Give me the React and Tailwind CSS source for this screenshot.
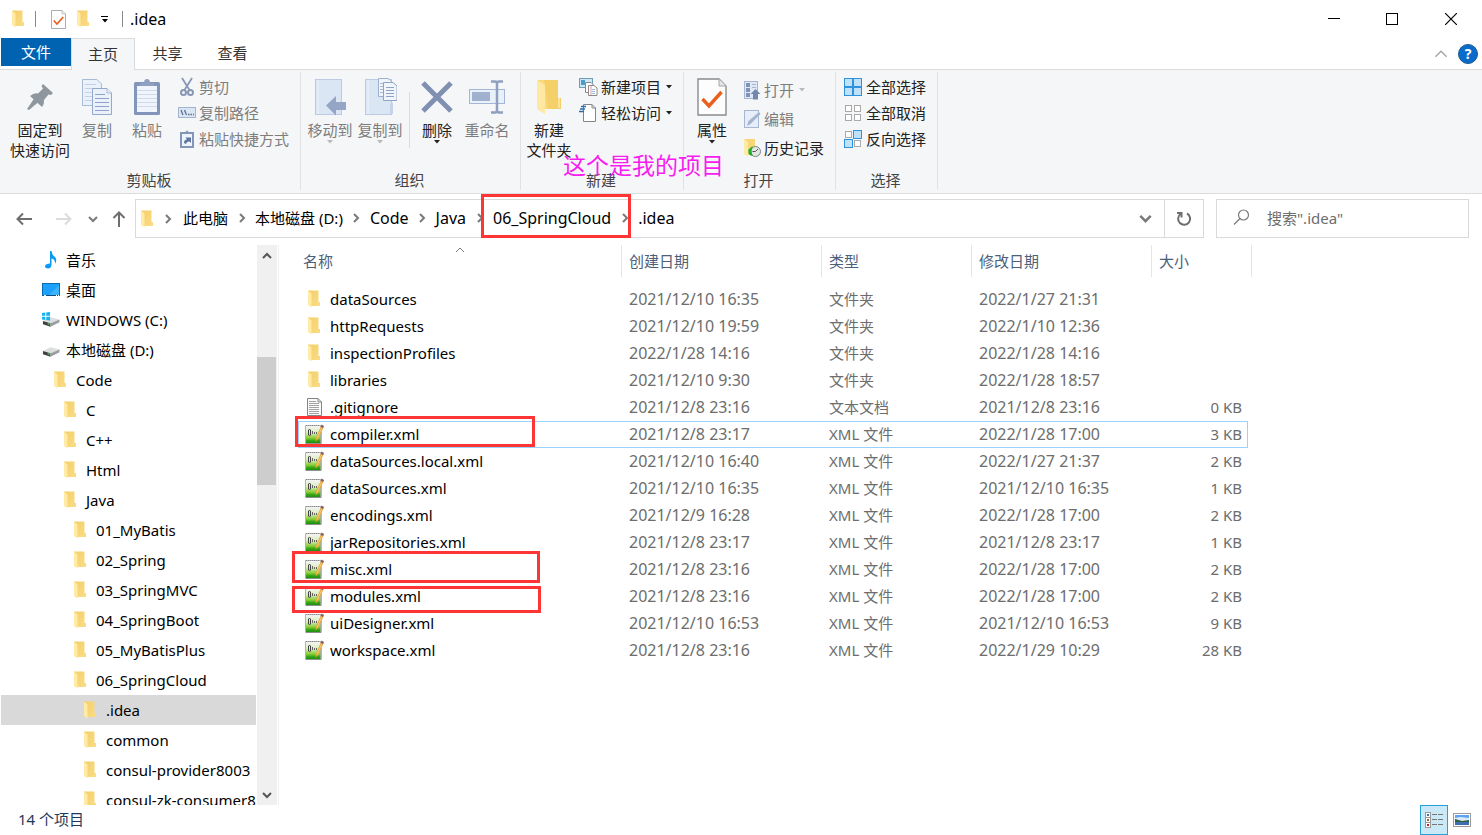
import clsx from "clsx";

// Icons
const FolderIcon = ({ className }) => (
  <svg width="12" height="18" viewBox="0.5 0 12 18" className={clsx("shrink-0", className)}>
    <defs>
      <linearGradient id="folderBack" x1="0" y1="0" x2="1" y2="1">
        <stop offset="0" stopColor="#f3cf6b" />
        <stop offset="1" stopColor="#fbdc85" />
      </linearGradient>
    </defs>
    <path d="M0.5 0.5H11V12H12.5V16H3L0.5 14Z" fill="url(#folderBack)" />
    <path d="M0.5 0.5L4 3.5V17.5L0.5 15Z" fill="#ffeaa6" />
  </svg>
);

const BigFolderIcon = () => (
  <svg width="26" height="36" viewBox="0 0 26 36">
    <path d="M2 1H22V19H25V30H6L2 27Z" fill="#f9d978" />
    <path d="M8 1H22V19H25V30H12Z" fill="#f5d068" />
    <path d="M1 1L9 6V35L1 30Z" fill="#ffe9a2" />
    <path d="M23 19V29" stroke="#fbe39a" strokeWidth="2" />
  </svg>
);

const PageCheckIcon = ({ width, height }) => (
  <svg width={width} height={height} viewBox="0 0 30 38">
    <path d="M1 1H22L29 8V37H1Z" fill="#fdfdfd" stroke="#8b8b8b" strokeWidth="1.4" />
    <path d="M22 1V8H29" fill="#e6e6e6" stroke="#a5a5a5" />
    <path d="M5.500 21L12 28L24.500 14" fill="none" stroke="#e8601c" strokeWidth="3.400" />
  </svg>
);

const PinIcon = () => (
  <svg width="28" height="28" viewBox="0 0 28 28" fill="#8f979e">
    <path d="M17 1L27 10L25 12L22.500 11.500L18 17Q18.500 21 16 24L4 13Q8 9.500 12 10.500L17 5.500L15.500 3Z" />
    <path d="M8.500 15L12.500 19L3 27L1 26Z" />
  </svg>
);

const CopyIcon = () => (
  <svg width="32" height="38" viewBox="0 0 32 38" fill="#eaf1fb" stroke="#a9bad6">
    <path d="M1.500 1.500H16L20.500 6V27.500H1.500Z" />
    <path d="M4 6.500H15M4 10.500H18M4 14.500H18M4 18.500H18M4 22.500H18" stroke="#c3d1e8" />
    <path d="M11.500 10.500H26L30.500 15V36.500H11.500Z" stroke="#94a8ca" />
    <path d="M26 10.500V15H30.500" />
    <path d="M14 16.500H24M14 20.500H28M14 24.500H28M14 28.500H28M14 32.500H28" stroke="#8fa3c6" />
  </svg>
);

const PasteIcon = () => (
  <svg width="28" height="38" viewBox="0 0 28 38">
    <rect x="1" y="4" width="26" height="33" rx="1.500" fill="#8396ba" />
    <rect x="4" y="8" width="20" height="26" fill="#f0f5fc" />
    <path d="M4 12.500H24M4 16.500H24M4 20.500H24M4 24.500H24M4 28.500H24" stroke="#cfdbed" />
    <path d="M7 8V5H11Q11 1 14 1Q17 1 17 5H21V8Z" fill="#8fa0c0" />
  </svg>
);

const ScissorsIcon = () => (
  <svg width="18" height="20" viewBox="0 0 18 20" fill="none" stroke="#8797b5">
    <path d="M4 1L11.500 13M14 1L6.500 13" strokeWidth="1.800" />
    <circle cx="5.500" cy="15.500" r="2.500" strokeWidth="2" />
    <circle cx="12.500" cy="15.500" r="2.500" strokeWidth="2" />
  </svg>
);

const CopyPathIcon = () => (
  <svg width="18" height="18" viewBox="0 0 18 18">
    <rect x="0.500" y="3.500" width="17" height="10" fill="#dbe6f5" stroke="#a3b3d0" />
    <path d="M3 6L5 11M6.500 6L8.500 11" stroke="#5e6f91" strokeWidth="1.300" />
    <path d="M10 10.500H11.500M12.500 10.500H14M15 10.500H16" stroke="#5e6f91" strokeWidth="1.300" />
  </svg>
);

const PasteShortcutIcon = () => (
  <svg width="18" height="20" viewBox="0 0 18 20">
    <rect x="3" y="4" width="12" height="14" fill="#eef4fc" stroke="#8396ba" strokeWidth="2" />
    <path d="M6 5V3H7.500Q9 0 10.500 3H12V5Z" fill="#8396ba" />
    <path d="M6 14Q6 10.500 9 10.500L7.500 8.500H13V14L11.500 12.500Q8.500 12 8 15Z" fill="#5d759f" />
  </svg>
);

const MoveToIcon = () => (
  <svg width="34" height="38" viewBox="0 0 34 38">
    <rect x="2.500" y="1.500" width="26" height="35" fill="#dbe6f5" stroke="#bccbe3" />
    <path d="M5 2V36" stroke="#edf3fb" />
    <path d="M13 27.500L23 18V24H33V32H23V37.500Z" fill="#94a5c5" />
  </svg>
);

const CopyToIcon = () => (
  <svg width="34" height="38" viewBox="0 0 34 38">
    <rect x="2.500" y="1.500" width="26" height="35" fill="#dbe6f5" stroke="#bccbe3" />
    <path d="M5 2V36" stroke="#edf3fb" />
    <path d="M15.500 0.500H25L28.500 3V18.500H15.500Z" fill="#f0f5fc" stroke="#9db0cf" />
    <path d="M17 5.500H26M17 8.500H26M17 11.500H26M17 14.500H26" stroke="#a9bad6" />
    <path d="M20.500 4.500H30L34 8V22.500H20.500Z" fill="#f0f5fc" stroke="#8fa3c6" />
    <path d="M23 9.500H31M23 12.500H31M23 15.500H31M23 18.500H31" stroke="#8fa3c6" />
    <path d="M27 36V26Q28 23 30 25V36Z" fill="#c6d4e9" />
  </svg>
);

const DeleteIcon = () => (
  <svg width="34" height="34" viewBox="0 0 34 34" stroke="#8090b2" strokeWidth="5">
    <path d="M3 3L31 31M31 3L3 31" />
  </svg>
);

const RenameIcon = () => (
  <svg width="38" height="36" viewBox="0 0 38 36" fill="none">
    <rect x="1.500" y="10.500" width="35" height="14" fill="#e8f0fa" stroke="#a3b6d6" />
    <rect x="4" y="13" width="18" height="9" fill="#a0b1cf" />
    <path d="M23 2.500H27Q29 2.500 29 5V31Q29 33.500 27 33.500H23M35 2.500H31Q29 2.500 29 5M35 33.500H31Q29 33.500 29 31" stroke="#8e9fbf" strokeWidth="2.500" />
  </svg>
);

const NewItemIcon = () => (
  <svg width="19" height="20" viewBox="0 0 19 20">
    <rect x="0.500" y="1.500" width="13" height="9" fill="#cfe7f3" stroke="#6f9db5" />
    <rect x="2" y="3" width="4" height="5" fill="#4b9cc9" />
    <path d="M6.500 5.500H12L14.500 8V15.500H6.500Z" fill="#fff" stroke="#8a8a8a" />
    <path d="M9.500 8.500H15L18 11V18.500H9.500Z" fill="#fff" stroke="#8a8a8a" />
    <path d="M12 9V18" stroke="#e79b9b" />
    <path d="M13 12.500H16M13 14.500H16M13 16.500H16" stroke="#9db9d8" />
  </svg>
);

const EasyAccessIcon = () => (
  <svg width="19" height="20" viewBox="0 0 19 20">
    <path d="M4.500 1.500H13L16.500 5V18.500H4.500Z" fill="#fff" stroke="#858585" />
    <path d="M13 1.500V5H16.500" fill="none" stroke="#858585" />
    <path d="M2 3.500H7M1 6H6M0 8.500H5" stroke="#2c6ca8" strokeWidth="1.300" />
  </svg>
);

const OpenIcon = () => (
  <svg width="17" height="20" viewBox="0 0 17 20">
    <rect x="0.500" y="1.500" width="13" height="17" fill="#dfe8f5" stroke="#a7b7d3" />
    <path d="M2 3H6V7H2ZM2 8H6V12H2ZM2 13H6V17H2Z" fill="#7f93b8" />
    <path d="M8 4.500H12M8 7.500H12" stroke="#a7b7d3" />
    <path d="M11.500 9L16.500 14H14V19.500H9V14H6.500Z" fill="#7387ae" />
  </svg>
);

const EditIcon = () => (
  <svg width="17" height="20" viewBox="0 0 17 20">
    <rect x="0.500" y="1.500" width="14" height="17" fill="#e6eefa" stroke="#a7b7d3" />
    <path d="M3 17L4.500 12L15 3L16.500 5L6.500 15Z" fill="#a4b3cf" />
  </svg>
);

const HistoryIcon = () => (
  <svg width="17" height="20" viewBox="0 0 17 20">
    <path d="M0 1H11V17H3L0 15Z" fill="#f7d677" />
    <path d="M0 1L4 4V19L0 16Z" fill="#ffeaa6" />
    <circle cx="11.500" cy="13.500" r="5" fill="#e4e6e4" stroke="#7d837d" />
    <path d="M11.500 13.500L14 11M11.500 13.500H8.500" stroke="#555" />
    <path d="M4 12L8.500 8V10Q6.500 13 9 18Q3.500 17.500 4.500 12.500Z" fill="#24ad35" />
  </svg>
);

const GRID_CELLS = [
  [0.5, 0.5],
  [9.5, 0.5],
  [0.5, 9.5],
  [9.5, 9.5],
];

const SelectIcon = ({ filled }) => (
  <svg width="18" height="18" viewBox="0 0 18 18">
    {GRID_CELLS.map(([x, y], i) => {
      const on = filled.includes(i);
      return (
        <rect
          key={i}
          x={on ? x : x + 1}
          y={on ? y : y + 1}
          width={on ? 8 : 6}
          height={on ? 8 : 6}
          fill={on ? "#bfe1fa" : "#fff"}
          stroke={on ? "#2f92dc" : "#a9a9a9"}
        />
      );
    })}
  </svg>
);

const MusicIcon = () => (
  <svg width="18" height="18" viewBox="0 0 18 18">
    <path d="M8 0H9.500Q10 4 13 6Q15.500 9 13 13Q13.500 8.500 9.500 7.500V14Q9 17.500 6 17.500Q3 17.500 3 15Q3.500 12.500 8 12.500Z" fill="#0a9bf5" />
  </svg>
);

const DesktopIcon = () => (
  <svg width="18" height="14" viewBox="0 0 18 14">
    <rect x="0.500" y="0.500" width="17" height="12" fill="#1ba1fb" stroke="#0b6cb5" />
    <path d="M7 12L17 2V12Z" fill="#3db2ff" />
    <path d="M1 12.500H17" stroke="#0a4f86" />
    <path d="M2 12.500H4M14 12.500H15M16 12.500H17" stroke="#fff" />
  </svg>
);

const DriveIcon = ({ windows }) => (
  <svg width="19" height="18" viewBox="0 0 19 18">
    <path d="M1 10L9 6L18.500 8.500L9 12.500Z" fill="#dcdee0" />
    <path d="M1 10L9 12.500V16L1 13.500Z" fill="#3e4143" />
    <path d="M9 12.500L18.500 8.500V11.500L9 16Z" fill="#9b9ea1" />
    <path d="M6 13.200H8" stroke="#54d05c" strokeWidth="1.500" />
    {windows && <path d="M0 1.500L3.500 1V4.500H0ZM4.500 1L8.500 0.500V4.500H4.500ZM0 5.500H3.500V9L0 8.500ZM4.500 5.500H8.500V9.500L4.500 9Z" fill="#16b1ee" />}
  </svg>
);

const TextFileIcon = () => (
  <svg width="20" height="20" viewBox="0 0 20 20">
    <path d="M2.500 1.500H13L16.500 5V18.500H2.500Z" fill="#fafafa" stroke="#858585" />
    <path d="M13 1.500V5H16.500" fill="none" stroke="#858585" />
    <path d="M4 4.500H11M4 6.500H14M4 8.500H14M4 10.500H14M4 12.500H14M4 14.500H14M4 16.500H14" stroke="#a3a3a3" />
  </svg>
);

const XmlFileIcon = () => (
  <svg width="20" height="20" viewBox="0 0 20 20">
    <defs>
      <linearGradient id="xmlGreen" x1="0" y1="0" x2="0" y2="1">
        <stop offset="0" stopColor="#f1f3ee" />
        <stop offset="0.350" stopColor="#dcedb8" />
        <stop offset="0.700" stopColor="#86cc34" />
        <stop offset="0.850" stopColor="#35a516" />
        <stop offset="1" stopColor="#1f8f12" />
      </linearGradient>
    </defs>
    <path d="M0.500 1.500H16V19.500H0.500Z" fill="#f2f2f2" stroke="#b3b3b3" />
    <rect x="1" y="3" width="14.500" height="16" fill="url(#xmlGreen)" />
    <path d="M1 1.500H15" stroke="#8c8c8c" strokeDasharray="1 1" />
    <path d="M16 8V19.500H1" fill="none" stroke="#8d938a" />
    <path d="M3.500 6V11M5.500 6V11" stroke="#444" />
    <path d="M3.500 5.500H5.500M3.500 11.500H5.500M7.500 7V10M9.500 8V10M11.500 8V10" stroke="#666" />
    <path d="M16.500 1L19 2.500L13 15L10.500 17.500L11 13.500Z" fill="#e6a53c" />
    <path d="M17.500 2L12 14.500" stroke="#f7cd7c" />
    <path d="M16.500 0.500L19 2L18 4L15.500 3Z" fill="#8c5f62" />
  </svg>
);

const PictureIcon = () => (
  <svg width="18" height="14" viewBox="0 0 18 14">
    <rect x="0.500" y="0.500" width="17" height="13" fill="#fff" stroke="#9a9a9a" />
    <rect x="2" y="2" width="14" height="4" fill="#5da3f0" />
    <path d="M2 5L7 4L16 5V8H2Z" fill="#dbeaf7" />
    <path d="M2 6L9 8L16 7V9H2Z" fill="#31603f" />
    <rect x="2" y="9" width="14" height="3" fill="#3f6fae" />
  </svg>
);

const DetailsIcon = () => (
  <svg width="18" height="17" viewBox="0 0 18 17">
    {["#3b73a8", "#a8672f", "#b5261e"].map((color, i) => (
      <g key={color}>
        <rect x="0.500" y={i * 5 + 0.5} width="5" height="5" fill="#fff" stroke="#999" />
        <rect x="2" y={i * 5 + 2} width="2" height="2" fill={color} />
        <path d={`M7 ${i * 5 + 2.5}H12M13 ${i * 5 + 2.5}H18`} stroke="#777" />
      </g>
    ))}
  </svg>
);

const Caret = ({ className }) => (
  <svg width="6" height="4" viewBox="0 0 6 4" className={clsx("shrink-0", className)}>
    <path d="M0 0H6L3 3.500Z" fill="currentColor" />
  </svg>
);

const Chevron = ({ d, size = 10, stroke = "#7a7a7a", strokeWidth = 2 }) => (
  <svg width={size} height={size} viewBox="0 0 10 10" fill="none" stroke={stroke} strokeWidth={strokeWidth}>
    <path d={d} />
  </svg>
);

const UP = "M1 7L5 3L9 7";
const DOWN = "M1 3L5 7L9 3";
const RIGHT = "M3 1L7 5L3 9";

const ArrowIcon = ({ d, color }) => (
  <svg width="16" height="16" viewBox="0 0 16 16" fill="none" stroke={color} strokeWidth="2">
    <path d={d} />
  </svg>
);

// Ribbon
const RibbonGroup = ({ title, className, children }) => (
  <section className={clsx("flex shrink-0 flex-col justify-between border-r border-[#e1e2e3]", className)}>
    <div className="flex">{children}</div>
    <h2 className="pr-0.5 text-center leading-5 text-[#444]">{title}</h2>
  </section>
);

const BigButton = ({ icon, lines, caret, disabled, className }) => (
  <button
    disabled={disabled}
    className={clsx("mt-1 flex shrink-0 flex-col items-center whitespace-nowrap leading-5", disabled ? "text-[#7d7d7d]" : "text-[#222]", className || "w-[50px]")}
  >
    <span className="flex h-11 items-center pb-0.5">{icon}</span>
    {lines.map((line) => (
      <span key={line}>{line}</span>
    ))}
    {caret && <Caret className={disabled ? "text-[#b9b9b9]" : "text-[#222]"} />}
  </button>
);

const SmallButton = ({ icon, label, caret, disabled, className }) => (
  <button
    disabled={disabled}
    className={clsx("flex items-center whitespace-nowrap", disabled ? "text-[#7d7d7d]" : "text-[#222]", className || "h-[26px] gap-[3px]")}
  >
    {icon}
    <span>{label}</span>
    {caret && <Caret className={clsx("ml-0.5", disabled && "text-[#b9b9b9]")} />}
  </button>
);

const Ribbon = () => (
  <div className="flex h-[125px] overflow-hidden border-y border-[#dadbdc] bg-[#f5f6f7] pt-0.5 pb-[3px]">
    <RibbonGroup title="剪贴板" className="w-[301px]">
      <BigButton icon={<PinIcon />} lines={["固定到", "快速访问"]} className="ml-[9px] w-[62px]" />
      <BigButton icon={<CopyIcon />} lines={["复制"]} disabled className="ml-px w-[50px]" />
      <BigButton icon={<PasteIcon />} lines={["粘贴"]} disabled />
      <div className="mt-0.5 ml-1.5 flex flex-col">
        <SmallButton icon={<ScissorsIcon />} label="剪切" disabled />
        <SmallButton icon={<CopyPathIcon />} label="复制路径" disabled />
        <SmallButton icon={<PasteShortcutIcon />} label="粘贴快捷方式" disabled />
      </div>
    </RibbonGroup>
    <RibbonGroup title="组织" className="w-[220px]">
      <BigButton icon={<MoveToIcon />} lines={["移动到"]} caret disabled className="ml-1 w-[50px]" />
      <BigButton icon={<CopyToIcon />} lines={["复制到"]} caret disabled />
      <div className="mt-5 mr-0.5 ml-1 h-14 w-px bg-[#dcddde]" />
      <BigButton icon={<DeleteIcon />} lines={["删除"]} caret />
      <BigButton icon={<RenameIcon />} lines={["重命名"]} disabled />
    </RibbonGroup>
    <RibbonGroup title="新建" className="relative w-[163px]">
      <BigButton icon={<BigFolderIcon />} lines={["新建", "文件夹"]} className="ml-[3px] w-[50px]" />
      <div className="mt-0.5 ml-[5px] flex flex-col">
        <SmallButton icon={<NewItemIcon />} label="新建项目" caret />
        <SmallButton icon={<EasyAccessIcon />} label="轻松访问" caret />
      </div>
      <span className="absolute bottom-[11px] left-[42px] z-10 text-[23px] leading-7 whitespace-nowrap text-[#f81cf0]">这个是我的项目</span>
    </RibbonGroup>
    <RibbonGroup title="打开" className="w-[152px]">
      <BigButton icon={<PageCheckIcon width={30} height={38} />} lines={["属性"]} caret className="ml-[3px] w-[50px]" />
      <div className="mt-[3px] ml-[7px] flex flex-col">
        <SmallButton icon={<OpenIcon />} label="打开" caret disabled className="h-[29px] gap-[3px]" />
        <SmallButton icon={<EditIcon />} label="编辑" disabled className="h-[29px] gap-[3px]" />
        <SmallButton icon={<HistoryIcon />} label="历史记录" className="h-[29px] gap-[3px]" />
      </div>
    </RibbonGroup>
    <RibbonGroup title="选择" className="w-[102px]">
      <div className="mt-0.5 ml-2 flex flex-col">
        <SmallButton icon={<SelectIcon filled={[0, 1, 2, 3]} />} label="全部选择" className="h-[26px] gap-1" />
        <SmallButton icon={<SelectIcon filled={[]} />} label="全部取消" className="h-[26px] gap-1" />
        <SmallButton icon={<SelectIcon filled={[1, 2]} />} label="反向选择" className="h-[26px] gap-1" />
      </div>
    </RibbonGroup>
  </div>
);

// Title bar and tabs
const TitleBar = () => (
  <header className="flex h-[38px] items-center justify-between pr-px pl-3">
    <div className="flex items-center">
      <FolderIcon />
      <span className="ml-[11px] h-4 w-px bg-[#8a8a8a]" />
      <button title="属性" className="ml-[15px]">
        <PageCheckIcon width={15} height={19} />
      </button>
      <button title="新建文件夹" className="ml-[11px]">
        <FolderIcon />
      </button>
      <button title="自定义快速访问工具栏" className="mx-3 flex flex-col items-center gap-0.5 text-black">
        <span className="h-px w-[7px] bg-black" />
        <Caret />
      </button>
      <span className="ml-0.5 h-4 w-px bg-[#8a8a8a]" />
      <h1 className="ml-[7px] text-base/5 text-black">.idea</h1>
    </div>
    <div className="flex">
      <button title="最小化" className="flex h-9 w-[58px] items-center justify-center">
        <svg width="12" height="12" viewBox="0 0 12 12" stroke="#000">
          <path d="M0 5.500H12" />
        </svg>
      </button>
      <button title="最大化" className="flex h-9 w-[58px] items-center justify-center">
        <svg width="12" height="12" viewBox="0 0 12 12" fill="none" stroke="#000">
          <rect x="0.500" y="0.500" width="11" height="11" />
        </svg>
      </button>
      <button title="关闭" className="flex h-9 w-[60px] items-center justify-center">
        <svg width="12" height="12" viewBox="0 0 12 12" stroke="#000" strokeWidth="1.200">
          <path d="M0 0L12 12M12 0L0 12" />
        </svg>
      </button>
    </div>
  </header>
);

const Tabs = () => (
  <nav className="-mb-px flex h-8 justify-between">
    <div className="flex">
      <button className="ml-px h-7 w-[70px] bg-[#0063b1] text-white">文件</button>
      <button className="z-10 w-16 border border-b-0 border-[#dadbdc] bg-[#f5f6f7] pb-0.5 text-[#333]">主页</button>
      <button className="w-[65px] pb-0.5 text-[#333]">共享</button>
      <button className="w-[65px] pb-0.5 text-[#333]">查看</button>
    </div>
    <div className="flex items-center gap-2.5 pr-1">
      <button title="最小化功能区">
        <Chevron d={UP} size={14} stroke="#a5a5a5" strokeWidth={1} />
      </button>
      <button title="帮助" className="size-5 rounded-full border border-[#1d5a94] bg-[#0a6bcb] text-sm leading-4 font-bold text-white">
        ?
      </button>
    </div>
  </nav>
);

// Address bar
const crumbs = [
  { label: "此电脑" },
  { label: "本地磁盘 (D:)" },
  { label: "Code", latin: true },
  { label: "Java", latin: true },
  { label: "06_SpringCloud", latin: true, marked: true },
  { label: ".idea", latin: true },
];

const AddressBar = () => (
  <div className="flex h-[51px] items-start pt-[5px] pr-[13px]">
    <div className="flex h-[39px] w-[135px] shrink-0 items-center pl-4">
      <button title="后退">
        <ArrowIcon d="M16 8H1.500M7 2.500L1.500 8L7 13.500" color="#6e6e6e" />
      </button>
      <button title="前进" className="ml-6" disabled>
        <ArrowIcon d="M0 8H14.500M9 2.500L14.500 8L9 13.500" color="#dcdcdc" />
      </button>
      <button title="最近浏览的位置" className="ml-4">
        <Chevron d={DOWN} />
      </button>
      <button title="上移" className="ml-[13px]">
        <ArrowIcon d="M8 16V1.500M2.500 7L8 1.500L13.500 7" color="#6e6e6e" />
      </button>
    </div>
    <div className="flex h-[39px] min-w-0 flex-1 items-center border border-[#d9d9d9] pl-[5px] text-black">
      <FolderIcon />
      <span className="flex w-[30px] justify-center">
        <Chevron d={RIGHT} />
      </span>
      {crumbs.map(({ label, latin, marked }, i) => (
        <span key={label} className="relative flex items-center whitespace-nowrap">
          <button className={clsx("pb-0.5", latin && "text-base/5")}>{label}</button>
          {i < crumbs.length - 1 && (
            <span className="flex w-[27px] justify-center pb-0.5">
              <Chevron d={RIGHT} />
            </span>
          )}
          {marked && <span className="absolute -top-3.5 right-[7px] -bottom-2 -left-3 border-3 border-[#fd3535]" />}
        </span>
      ))}
      <button title="以前的位置" className="mr-3 ml-auto">
        <Chevron d={DOWN} size={13} />
      </button>
      <button title="刷新" className="flex h-full w-[39px] items-center justify-center border-l border-[#d9d9d9]">
        <svg width="16" height="16" viewBox="0 0 16 16" fill="none" stroke="#6e6e6e" strokeWidth="2">
          <path d="M11 2.500A6 6 0 1 1 4.500 3" />
          <path d="M1 2H5.500V6.500" />
        </svg>
      </button>
    </div>
    <div className="ml-3 flex h-[39px] w-[253px] items-center gap-[17px] border border-[#d9d9d9] pb-0.5 pl-4">
      <svg width="17" height="17" viewBox="0 0 17 17" fill="none" stroke="#7a7a7a" strokeWidth="1.200" className="shrink-0">
        <circle cx="10.500" cy="6" r="5" />
        <path d="M7 9.500L1 15.500" />
      </svg>
      <input aria-label="搜索" placeholder={'搜索".idea"'} className="w-full min-w-0 outline-none placeholder:text-[#6d6d6d]" />
    </div>
  </div>
);

// Navigation tree
const levelPadding = ["pl-[41px]", "pl-[51px]", "pl-[61px]", "pl-[71px]", "pl-[81px]"];

const tree = [
  { label: "音乐", level: 0, icon: <MusicIcon /> },
  { label: "桌面", level: 0, icon: <DesktopIcon /> },
  { label: "WINDOWS (C:)", level: 0, icon: <DriveIcon windows /> },
  { label: "本地磁盘 (D:)", level: 0, icon: <DriveIcon /> },
  { label: "Code", level: 1 },
  { label: "C", level: 2 },
  { label: "C++", level: 2 },
  { label: "Html", level: 2 },
  { label: "Java", level: 2 },
  { label: "01_MyBatis", level: 3 },
  { label: "02_Spring", level: 3 },
  { label: "03_SpringMVC", level: 3 },
  { label: "04_SpringBoot", level: 3 },
  { label: "05_MyBatisPlus", level: 3 },
  { label: "06_SpringCloud", level: 3 },
  { label: ".idea", level: 4, selected: true },
  { label: "common", level: 4 },
  { label: "consul-provider8003", level: 4 },
  { label: "consul-zk-consumer80", level: 4 },
];

const Sidebar = () => (
  <aside className="flex w-[279px] shrink-0 border-r border-[#f0f0f0] pl-px">
    <ul className="w-[255px] overflow-hidden">
      {tree.map(({ label, level, icon, selected }) => (
        <li key={label}>
          <button className={clsx("flex h-[30px] w-full items-center gap-1.5 whitespace-nowrap text-black", levelPadding[level], selected && "bg-[#d9d9d9]")}>
            <span className="flex w-[18px] shrink-0 justify-center">{icon || <FolderIcon className="mr-0.5" />}</span>
            {label}
          </button>
        </li>
      ))}
    </ul>
    <div className="ml-px flex w-5 flex-col bg-[#f0f0f0]">
      <button title="向上滚动" className="flex h-[21px] items-center justify-center">
        <Chevron d={UP} stroke="#555" />
      </button>
      <div className="grow-[91]" />
      <div className="mr-px grow-[128] bg-[#cdcdcd]" />
      <div className="grow-[299]" />
      <button title="向下滚动" className="flex h-[21px] items-center justify-center">
        <Chevron d={DOWN} stroke="#555" />
      </button>
    </div>
  </aside>
);

// File list
const XML = "XML 文件";

const files = [
  { name: "dataSources", created: "2021/12/10 16:35", type: "文件夹", modified: "2022/1/27 21:31" },
  { name: "httpRequests", created: "2021/12/10 19:59", type: "文件夹", modified: "2022/1/10 12:36" },
  { name: "inspectionProfiles", created: "2022/1/28 14:16", type: "文件夹", modified: "2022/1/28 14:16" },
  { name: "libraries", created: "2021/12/10 9:30", type: "文件夹", modified: "2022/1/28 18:57" },
  { name: ".gitignore", created: "2021/12/8 23:16", type: "文本文档", modified: "2021/12/8 23:16", size: "0 KB" },
  { name: "compiler.xml", created: "2021/12/8 23:17", type: XML, modified: "2022/1/28 17:00", size: "3 KB", focused: true, mark: "-top-1.5 -left-1 h-[31px] w-60" },
  { name: "dataSources.local.xml", created: "2021/12/10 16:40", type: XML, modified: "2022/1/27 21:37", size: "2 KB" },
  { name: "dataSources.xml", created: "2021/12/10 16:35", type: XML, modified: "2021/12/10 16:35", size: "1 KB" },
  { name: "encodings.xml", created: "2021/12/9 16:28", type: XML, modified: "2022/1/28 17:00", size: "2 KB" },
  { name: "jarRepositories.xml", created: "2021/12/8 23:17", type: XML, modified: "2021/12/8 23:17", size: "1 KB" },
  { name: "misc.xml", created: "2021/12/8 23:16", type: XML, modified: "2022/1/28 17:00", size: "2 KB", mark: "-top-[5px] -left-1.5 h-8 w-[248px]" },
  { name: "modules.xml", created: "2021/12/8 23:16", type: XML, modified: "2022/1/28 17:00", size: "2 KB", mark: "top-[3px] -left-1.5 h-[27px] w-[249px]" },
  { name: "uiDesigner.xml", created: "2021/12/10 16:53", type: XML, modified: "2021/12/10 16:53", size: "9 KB" },
  { name: "workspace.xml", created: "2021/12/8 23:16", type: XML, modified: "2022/1/29 10:29", size: "28 KB" },
];

const fileIcon = (type) => {
  if (type === "文件夹") return <FolderIcon className="mr-0.5" />;
  return type === XML ? <XmlFileIcon /> : <TextFileIcon />;
};

const FileRow = ({ file }) => {
  const edge = file.focused && "border-y border-[#99d1ff]";
  return (
    <tr className="h-[27px] text-[#6d6d6d]">
      <td className={clsx("relative p-0 pb-0.5", edge, file.focused && "border-l")}>
        <div className={clsx("flex items-center gap-[5px] text-black", file.focused ? "pl-1.5" : "pl-[7px]")}>
          <span className="flex w-5 shrink-0 justify-center">{fileIcon(file.type)}</span>
          {file.name}
        </div>
        {file.mark && <span className={clsx("absolute border-3 border-[#fd3535]", file.mark)} />}
      </td>
      <td className={clsx("p-0 pb-0.5 pl-[7px] text-base/5", edge)}>{file.created}</td>
      <td className={clsx("p-0 pb-0.5 pl-[7px]", edge)}>{file.type}</td>
      <td className={clsx("p-0 pb-0.5 pl-[7px] text-base/5", edge)}>{file.modified}</td>
      <td className={clsx("p-0 pb-0.5 text-right", edge, file.focused ? "border-r pr-[5px]" : "pr-1.5")}>{file.size}</td>
      <td />
    </tr>
  );
};

const headCell = "border-r border-[#e5e5e5] p-0 pl-[7px] text-left font-normal";

const FileList = () => (
  <main className="min-w-0 flex-1 overflow-hidden pl-[19px]">
    <table className="w-[954px] table-fixed border-separate border-spacing-0 whitespace-nowrap">
      <colgroup>
        <col className="w-[324px]" />
        <col className="w-[200px]" />
        <col className="w-[150px]" />
        <col className="w-[180px]" />
        <col className="w-24" />
        <col className="w-1" />
      </colgroup>
      <thead>
        <tr className="h-8 text-[#4c607a]">
          <th className="relative border-r border-[#e5e5e5] p-0 pl-[5px] text-left font-normal">
            名称
            <span className="absolute top-0 left-1/2 -translate-x-1/2">
              <Chevron d={UP} stroke="#777" strokeWidth={1} />
            </span>
          </th>
          <th className={headCell}>创建日期</th>
          <th className={headCell}>类型</th>
          <th className={headCell}>修改日期</th>
          <th className={headCell} colSpan={2}>
            大小
          </th>
        </tr>
      </thead>
      <tbody className="before:block before:h-[9px]">
        {files.map((file) => (
          <FileRow key={file.name} file={file} />
        ))}
      </tbody>
    </table>
  </main>
);

const StatusBar = () => (
  <footer className="flex h-[30px] shrink-0 items-center justify-between pr-[11px] pl-[18px] text-[#1e395b]">
    <span className="pb-0.5">14 个项目</span>
    <div className="flex h-full items-center gap-[5px]">
      <button title="详细信息" className="flex h-full w-7 items-center justify-center border border-[#26a0da] bg-[#cbe8f6]">
        <DetailsIcon />
      </button>
      <button title="大缩略图">
        <PictureIcon />
      </button>
    </div>
  </footer>
);

const App = () => (
  <div className="flex h-screen flex-col bg-white font-['Noto_Sans','Noto_Sans_CJK_SC',sans-serif] text-[15px] leading-5">
    <TitleBar />
    <Tabs />
    <Ribbon />
    <AddressBar />
    <div className="flex min-h-0 flex-1">
      <Sidebar />
      <FileList />
    </div>
    <StatusBar />
  </div>
);

export default App;
